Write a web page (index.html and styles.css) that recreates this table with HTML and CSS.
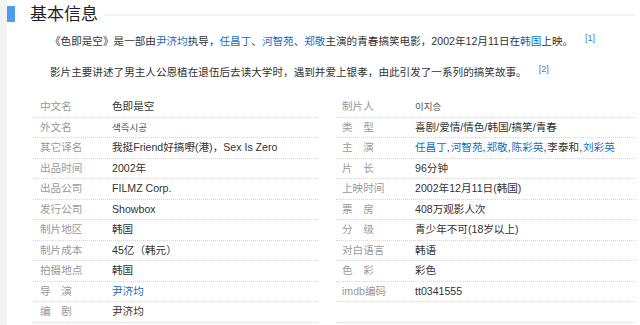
FILE: index.html
```html
<!DOCTYPE html>
<html lang="zh-CN">
<head>
<meta charset="utf-8">
<link rel="stylesheet" href="styles.css">
</head>
<body>
<div class="page">
  <div class="title-row">
    <span class="title-bar"></span>
    <h2 class="title">基本信息</h2>
    <span class="title-rule"></span>
  </div>
  <p class="para para-first">《色即是空》是一部由<a class="link" href="#">尹济均</a>执导，<a class="link" href="#">任昌丁</a>、<a class="link" href="#">河智苑</a>、<a class="link" href="#">郑敬</a>主演的青春搞笑电影，2002年12月11日在<a class="link" href="#">韩国</a>上映。<sup class="ref">[1]</sup></p>
  <p class="para para-second">影片主要讲述了男主人公恩植在退伍后去读大学时，遇到并爱上银孝，由此引发了一系列的搞笑故事。<sup class="ref">[2]</sup></p>
  <div class="info">
    <dl class="info-col">
      <div class="row"><dt class="label">中文名</dt><dd class="value">色即是空</dd></div>
      <div class="row"><dt class="label">外文名</dt><dd class="value kr">색즉시공</dd></div>
      <div class="row"><dt class="label">其它译名</dt><dd class="value">我挺Friend好搞嘢(港)，Sex Is Zero</dd></div>
      <div class="row"><dt class="label">出品时间</dt><dd class="value">2002年</dd></div>
      <div class="row"><dt class="label">出品公司</dt><dd class="value">FILMZ Corp.</dd></div>
      <div class="row"><dt class="label">发行公司</dt><dd class="value">Showbox</dd></div>
      <div class="row"><dt class="label">制片地区</dt><dd class="value">韩国</dd></div>
      <div class="row"><dt class="label">制片成本</dt><dd class="value">45亿（韩元）</dd></div>
      <div class="row"><dt class="label">拍摄地点</dt><dd class="value">韩国</dd></div>
      <div class="row"><dt class="label">导　演</dt><dd class="value"><a class="link" href="#">尹济均</a></dd></div>
      <div class="row"><dt class="label">编　剧</dt><dd class="value">尹济均</dd></div>
    </dl>
    <dl class="info-col">
      <div class="row"><dt class="label">制片人</dt><dd class="value kr">이지승</dd></div>
      <div class="row"><dt class="label">类　型</dt><dd class="value">喜剧/爱情/情色/韩国/搞笑/青春</dd></div>
      <div class="row"><dt class="label">主　演</dt><dd class="value"><a class="link" href="#">任昌丁</a><span class="sep">,</span><a class="link" href="#">河智苑</a><span class="sep">,</span><a class="link" href="#">郑敬</a><span class="sep">,</span><a class="link" href="#">陈彩英</a><span class="sep">,</span>李泰和<span class="sep">,</span><a class="link" href="#">刘彩英</a></dd></div>
      <div class="row"><dt class="label">片　长</dt><dd class="value">96分钟</dd></div>
      <div class="row"><dt class="label">上映时间</dt><dd class="value">2002年12月11日(韩国)</dd></div>
      <div class="row"><dt class="label">票　房</dt><dd class="value">408万观影人次</dd></div>
      <div class="row"><dt class="label">分　级</dt><dd class="value">青少年不可(18岁以上)</dd></div>
      <div class="row"><dt class="label">对白语言</dt><dd class="value">韩语</dd></div>
      <div class="row"><dt class="label">色　彩</dt><dd class="value">彩色</dd></div>
      <div class="row"><dt class="label">imdb编码</dt><dd class="value">tt0341555</dd></div>
      <div class="row"><dt class="label"></dt><dd class="value"></dd></div>
    </dl>
  </div>
</div>
</body>
</html>
```
FILE: styles.css
```css
html, body {
  margin: 0;
  padding: 0;
  background: #fff;
}
body {
  font-family: "Liberation Sans", "Noto Sans CJK SC", sans-serif;
  color: #333;
  width: 640px;
  height: 325px;
  overflow: hidden;
}
.page {
  border-left: 7px solid #f3f3f3;
  height: 325px;
  box-sizing: border-box;
}
.title-row {
  display: flex;
  align-items: center;
  height: 26px;
}
.title-bar {
  width: 8px;
  height: 16px;
  background: #4f9cee;
  margin-top: 1px;
}
.title {
  margin: 0 0 0 15px;
  font-size: 17px;
  font-weight: normal;
  color: #222;
  line-height: 26px;
  font-family: "Noto Sans CJK SC", sans-serif;
}
.title-rule {
  flex: 1;
  height: 2px;
  background: #f3f3f3;
  margin: 3px 5px 0 6px;
}
.para {
  margin: 0;
  padding-left: 43px;
  font-size: 10.6px;
  line-height: 20px;
  color: #333;
}
.para-first {
  margin-top: 5px;
}
.para-second {
  margin-top: 11px;
}
.link {
  color: #136ec2;
  text-decoration: none;
}
.ref {
  font-size: 9px;
  color: #3e7bc0;
  margin-left: 12px;
  vertical-align: 4px;
  line-height: 0;
}
.info {
  display: grid;
  grid-template-columns: 285px 1fr;
  column-gap: 18px;
  padding: 0 4px 0 26px;
  margin-top: 15px;
}
.info-col {
  margin: 0;
}
.row {
  display: flex;
  height: 19.5px;
  line-height: 19.5px;
  border-bottom: 1px dotted #d6d6d6;
  font-size: 10.6px;
}
.label {
  width: 72px;
  padding-left: 7px;
  color: #999;
  white-space: nowrap;
}
.info-col + .info-col .label {
  width: 73px;
  padding-left: 6px;
}
.value {
  margin: 0;
  color: #333;
  white-space: nowrap;
}
.kr {
  font-family: "Noto Sans CJK KR", sans-serif;
  font-size: 9.5px;
  color: #555;
}
.sep {
  margin: 0 1px 0 0;
}
```
